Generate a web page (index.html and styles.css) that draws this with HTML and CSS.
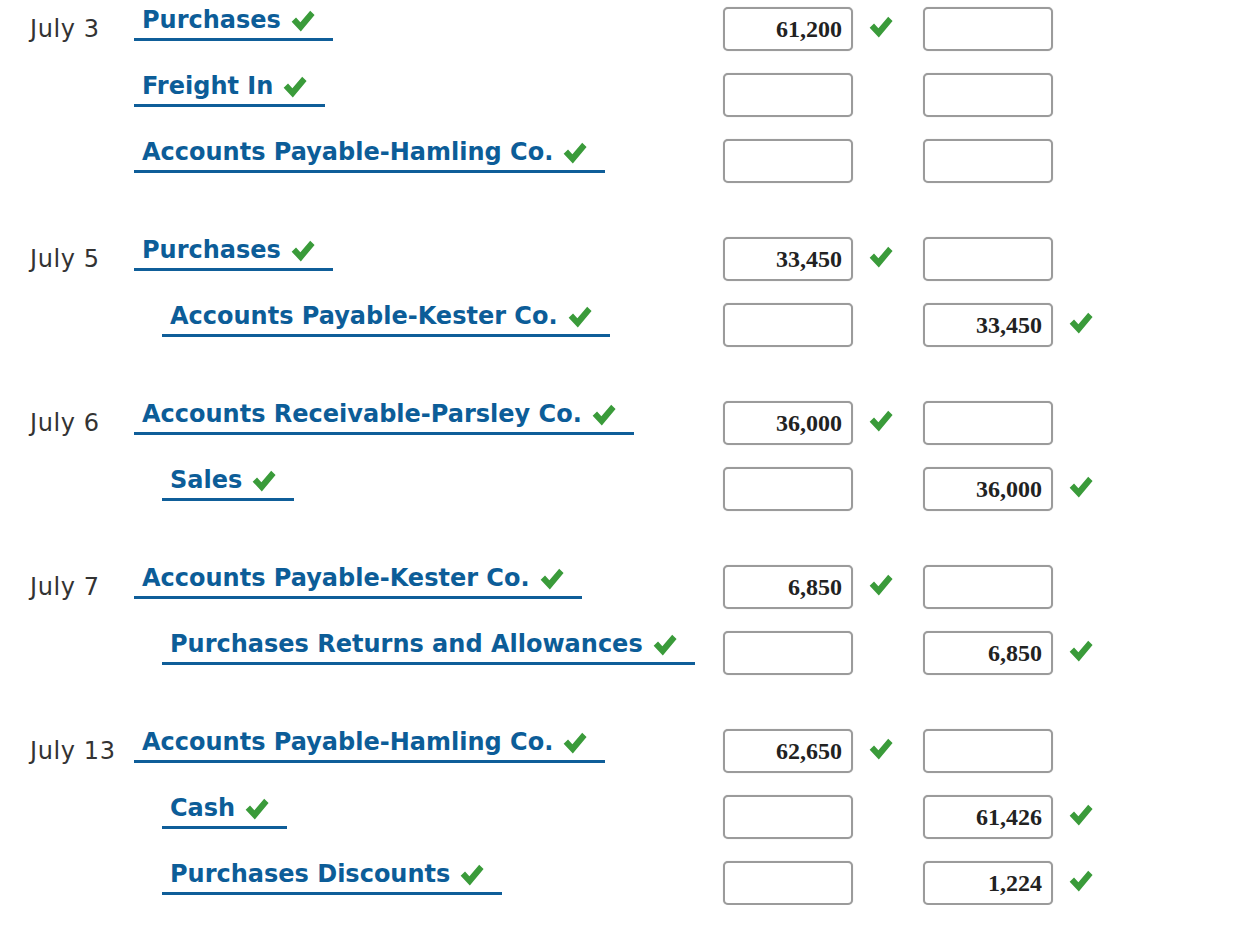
FILE: index.html
```html
<!DOCTYPE html>
<html>
<head>
<meta charset="utf-8">
<link rel="stylesheet" href="styles.css">
</head>
<body>
<svg width="0" height="0" class="defs" aria-hidden="true">
  <defs>
    <symbol id="chk" viewBox="0 0 22 20">
      <path d="M0.6 10.6 L4.6 6.8 L8.6 11.2 L17.6 0.6 L21.6 4.4 L9 19.6 Z" fill="#3a9b3a"/>
    </symbol>
  </defs>
</svg>
<div class="journal">

  <div class="entry">
    <div class="line">
      <div class="date">July 3</div>
      <div class="acct"><span class="sel">Purchases<svg class="ck"><use href="#chk"/></svg></span></div>
      <div class="box filled">61,200</div>
      <div class="mark"><svg class="ck"><use href="#chk"/></svg></div>
      <div class="box"></div>
      <div class="mark"></div>
    </div>
    <div class="line">
      <div class="date"></div>
      <div class="acct"><span class="sel">Freight In<svg class="ck"><use href="#chk"/></svg></span></div>
      <div class="box"></div>
      <div class="mark"></div>
      <div class="box"></div>
      <div class="mark"></div>
    </div>
    <div class="line">
      <div class="date"></div>
      <div class="acct"><span class="sel">Accounts Payable-Hamling Co.<svg class="ck"><use href="#chk"/></svg></span></div>
      <div class="box"></div>
      <div class="mark"></div>
      <div class="box"></div>
      <div class="mark"></div>
    </div>
  </div>

  <div class="entry">
    <div class="line">
      <div class="date">July 5</div>
      <div class="acct"><span class="sel">Purchases<svg class="ck"><use href="#chk"/></svg></span></div>
      <div class="box filled">33,450</div>
      <div class="mark"><svg class="ck"><use href="#chk"/></svg></div>
      <div class="box"></div>
      <div class="mark"></div>
    </div>
    <div class="line">
      <div class="date"></div>
      <div class="acct"><span class="sel indent">Accounts Payable-Kester Co.<svg class="ck"><use href="#chk"/></svg></span></div>
      <div class="box"></div>
      <div class="mark"></div>
      <div class="box filled">33,450</div>
      <div class="mark"><svg class="ck"><use href="#chk"/></svg></div>
    </div>
  </div>

  <div class="entry">
    <div class="line">
      <div class="date">July 6</div>
      <div class="acct"><span class="sel">Accounts Receivable-Parsley Co.<svg class="ck"><use href="#chk"/></svg></span></div>
      <div class="box filled">36,000</div>
      <div class="mark"><svg class="ck"><use href="#chk"/></svg></div>
      <div class="box"></div>
      <div class="mark"></div>
    </div>
    <div class="line">
      <div class="date"></div>
      <div class="acct"><span class="sel indent">Sales<svg class="ck"><use href="#chk"/></svg></span></div>
      <div class="box"></div>
      <div class="mark"></div>
      <div class="box filled">36,000</div>
      <div class="mark"><svg class="ck"><use href="#chk"/></svg></div>
    </div>
  </div>

  <div class="entry">
    <div class="line">
      <div class="date">July 7</div>
      <div class="acct"><span class="sel">Accounts Payable-Kester Co.<svg class="ck"><use href="#chk"/></svg></span></div>
      <div class="box filled">6,850</div>
      <div class="mark"><svg class="ck"><use href="#chk"/></svg></div>
      <div class="box"></div>
      <div class="mark"></div>
    </div>
    <div class="line">
      <div class="date"></div>
      <div class="acct"><span class="sel indent">Purchases Returns and Allowances<svg class="ck"><use href="#chk"/></svg></span></div>
      <div class="box"></div>
      <div class="mark"></div>
      <div class="box filled">6,850</div>
      <div class="mark"><svg class="ck"><use href="#chk"/></svg></div>
    </div>
  </div>

  <div class="entry">
    <div class="line">
      <div class="date">July 13</div>
      <div class="acct"><span class="sel">Accounts Payable-Hamling Co.<svg class="ck"><use href="#chk"/></svg></span></div>
      <div class="box filled">62,650</div>
      <div class="mark"><svg class="ck"><use href="#chk"/></svg></div>
      <div class="box"></div>
      <div class="mark"></div>
    </div>
    <div class="line">
      <div class="date"></div>
      <div class="acct"><span class="sel indent">Cash<svg class="ck"><use href="#chk"/></svg></span></div>
      <div class="box"></div>
      <div class="mark"></div>
      <div class="box filled">61,426</div>
      <div class="mark"><svg class="ck"><use href="#chk"/></svg></div>
    </div>
    <div class="line">
      <div class="date"></div>
      <div class="acct"><span class="sel indent">Purchases Discounts<svg class="ck"><use href="#chk"/></svg></span></div>
      <div class="box"></div>
      <div class="mark"></div>
      <div class="box filled">1,224</div>
      <div class="mark"><svg class="ck"><use href="#chk"/></svg></div>
    </div>
  </div>

</div>
</body>
</html>
```

FILE: styles.css
```css
html, body {
  margin: 0;
  padding: 0;
  background: #ffffff;
}

.defs {
  position: absolute;
  width: 0;
  height: 0;
  overflow: hidden;
}

.journal {
  display: flex;
  flex-direction: column;
  gap: 54px;
  padding-top: 7px;
  font-family: "DejaVu Sans", Verdana, sans-serif;
}

.entry {
  display: flex;
  flex-direction: column;
  gap: 22px;
}

.line {
  display: grid;
  grid-template-columns: 134px 589px 130px 70px 130px 60px;
  height: 44px;
  align-items: start;
}

.date {
  padding-left: 30px;
  padding-top: 9px;
  font-size: 24px;
  line-height: 26px;
  letter-spacing: 0.6px;
  color: #333333;
  white-space: nowrap;
}

.acct {
  display: flex;
}

.sel {
  display: inline-flex;
  align-items: flex-start;
  padding: 0 18px 5px 8px;
  border-bottom: 3px solid #0f5e99;
  font-size: 24px;
  line-height: 26px;
  font-weight: bold;
  color: #0c5d98;
  white-space: nowrap;
}

.sel.indent {
  margin-left: 28px;
}

.sel .ck {
  margin-left: 10px;
  margin-top: 3px;
}

.ck {
  width: 24px;
  height: 22px;
  display: block;
}

.box {
  box-sizing: border-box;
  width: 130px;
  height: 44px;
  border: 2px solid #9b9b9b;
  border-radius: 5px;
  box-shadow: 0 0 1px rgba(0, 0, 0, 0.25);
  background: #ffffff;
  font-family: "Liberation Serif", "Times New Roman", serif;
  font-weight: bold;
  font-size: 24px;
  line-height: 40px;
  color: #222222;
  text-align: right;
  padding-right: 9px;
}

.mark {
  padding-left: 16px;
  padding-top: 9px;
}
```
